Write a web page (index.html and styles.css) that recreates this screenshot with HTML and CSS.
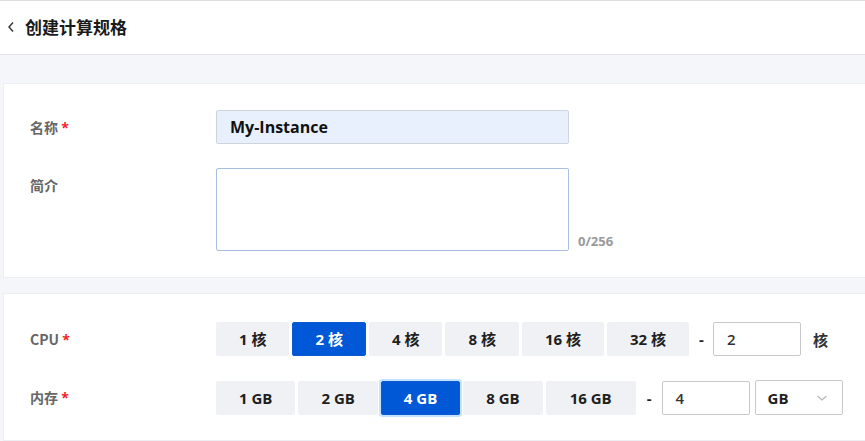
FILE: index.html
```html
<!DOCTYPE html>
<html lang="zh">
<head>
<meta charset="utf-8">
<title>创建计算规格</title>
<link rel="stylesheet" href="styles.css">
</head>
<body>
<header class="topbar">
  <span class="back"><svg width="8" height="12" viewBox="0 0 8 12"><path d="M6 1.5 L2 6 L6 10.5" fill="none" stroke="#333" stroke-width="1.4"/></svg></span>
  <h1 class="title">创建计算规格</h1>
</header>
<main class="page">
  <section class="card card-basic">
    <div class="row">
      <label class="label">名称 <span class="req">*</span></label>
      <div class="field"><div class="input name-input">My-Instance</div></div>
    </div>
    <div class="row">
      <label class="label">简介</label>
      <div class="field field-ta">
        <div class="textarea"></div>
        <span class="count">0/256</span>
      </div>
    </div>
  </section>
  <section class="card card-spec">
    <div class="row">
      <label class="label">CPU <span class="req">*</span></label>
      <div class="field options">
        <span class="opt">1 核</span>
        <span class="opt on">2 核</span>
        <span class="opt">4 核</span>
        <span class="opt">8 核</span>
        <span class="opt">16 核</span>
        <span class="opt">32 核</span>
        <span class="dash">-</span>
        <div class="num">2</div>
        <span class="unit">核</span>
      </div>
    </div>
    <div class="row">
      <label class="label">内存 <span class="req">*</span></label>
      <div class="field options">
        <span class="opt gb">1 GB</span>
        <span class="opt gb">2 GB</span>
        <span class="opt gb on focus">4 GB</span>
        <span class="opt gb">8 GB</span>
        <span class="opt gb w16">16 GB</span>
        <span class="dash wide">-</span>
        <div class="num">4</div>
        <div class="select"><span>GB</span><svg width="12" height="8" viewBox="0 0 12 8"><path d="M1.5 2 L6 6 L10.5 2" fill="none" stroke="#b5b5b5" stroke-width="1.1"/></svg></div>
      </div>
    </div>
  </section>
</main>
</body>
</html>
```
FILE: styles.css
```css
* { box-sizing: border-box; }
html, body { margin: 0; padding: 0; }
body {
  background: #f5f6f9;
  font-family: "Open Sans", "Noto Sans CJK SC", sans-serif;
  color: #1f1f1f;
  width: 865px;
  height: 441px;
  overflow: hidden;
}
.topbar {
  height: 55px;
  background: #fff;
  border-top: 1px solid #dcdde1;
  border-bottom: 1px solid #e4e5e9;
  display: flex;
  align-items: center;
  padding-left: 7px;
  gap: 10px;
}
.back { display: flex; align-items: center; height: 12px; margin-top: -1px; }
.title {
  margin: 0;
  font-size: 17px;
  font-weight: 700;
  color: #1a1a1a;
  font-family: "Noto Sans CJK SC", sans-serif;
  line-height: 1;
  margin-top: -2px;
}
.page {
  padding: 28px 0 0 3px;
  display: flex;
  flex-direction: column;
  gap: 15px;
}
.card {
  background: #fff;
  border: 1px solid #edeef1;
  border-right: none;
  display: flex;
  flex-direction: column;
  gap: 23px;
  padding-left: 26px;
}
.card-basic { padding-top: 26px; padding-bottom: 26px; height: 195px; }
.card-spec { padding-top: 28px; height: 148px; }
.row { display: flex; align-items: flex-start; }
.label {
  width: 186px;
  flex: none;
  line-height: 34px;
  font-size: 14px;
  font-weight: 700;
  color: #666;
  font-family: "Noto Sans CJK SC", sans-serif;
}
.label .req { color: #f5222d; font-family: "Open Sans", sans-serif; }
.field { display: flex; }
.input {
  width: 353px;
  height: 34px;
  border: 1px solid #cfd3da;
  border-radius: 2px;
  background: #e8f0fe;
  padding-left: 13px;
  line-height: 32px;
  font-size: 16px;
  font-weight: 700;
  color: #111;
}
.field-ta { align-items: flex-end; gap: 9px; }
.textarea {
  width: 353px;
  height: 83px;
  border: 1px solid #a9bfdf;
  border-radius: 2px;
  background: #fff;
}
.count {
  font-size: 13px;
  font-weight: 700;
  color: #999;
  line-height: 18px;
  margin-bottom: 1px;
}
.options { align-items: center; gap: 3px; }
.opt {
  height: 34px;
  line-height: 34px;
  background: #f0f1f4;
  border-radius: 2px;
  padding: 0 23px;
  font-size: 15px;
  font-weight: 700;
  color: #1f1f1f;
  font-family: "Open Sans", "Noto Sans CJK SC", sans-serif;
  white-space: nowrap;
}
.opt.gb { padding: 0 23px; }
.opt.gb.w16 { padding: 0 24px; }
.opt.on {
  background: #0058d6;
  color: #fff;
  border: 1px solid #0a5ad4;
  line-height: 32px;
  padding: 0 22px;
}
.opt.focus { box-shadow: 0 0 0 2px #c3e2ff; }
.dash {
  font-size: 15px;
  font-weight: 700;
  color: #1f1f1f;
  margin: 0 6px 0 7px;
}
.dash.wide { margin: 0 7px 0 8px; }
.num {
  width: 88px;
  height: 34px;
  border: 1px solid #c9c9c9;
  border-radius: 2px;
  padding-left: 13px;
  line-height: 32px;
  font-size: 15px;
  color: #333;
  font-weight: 600;
}
.unit {
  font-size: 15px;
  font-weight: 700;
  color: #333;
  margin-left: 9px;
  font-family: "Noto Sans CJK SC", sans-serif;
}
.select {
  width: 88px;
  height: 35px;
  border: 1px solid #c9c9c9;
  border-radius: 2px;
  margin-left: 2px;
  display: flex;
  align-items: center;
  justify-content: space-between;
  padding: 0 14px 0 12px;
  font-size: 15px;
  font-weight: 700;
  color: #1f1f1f;
}
```
